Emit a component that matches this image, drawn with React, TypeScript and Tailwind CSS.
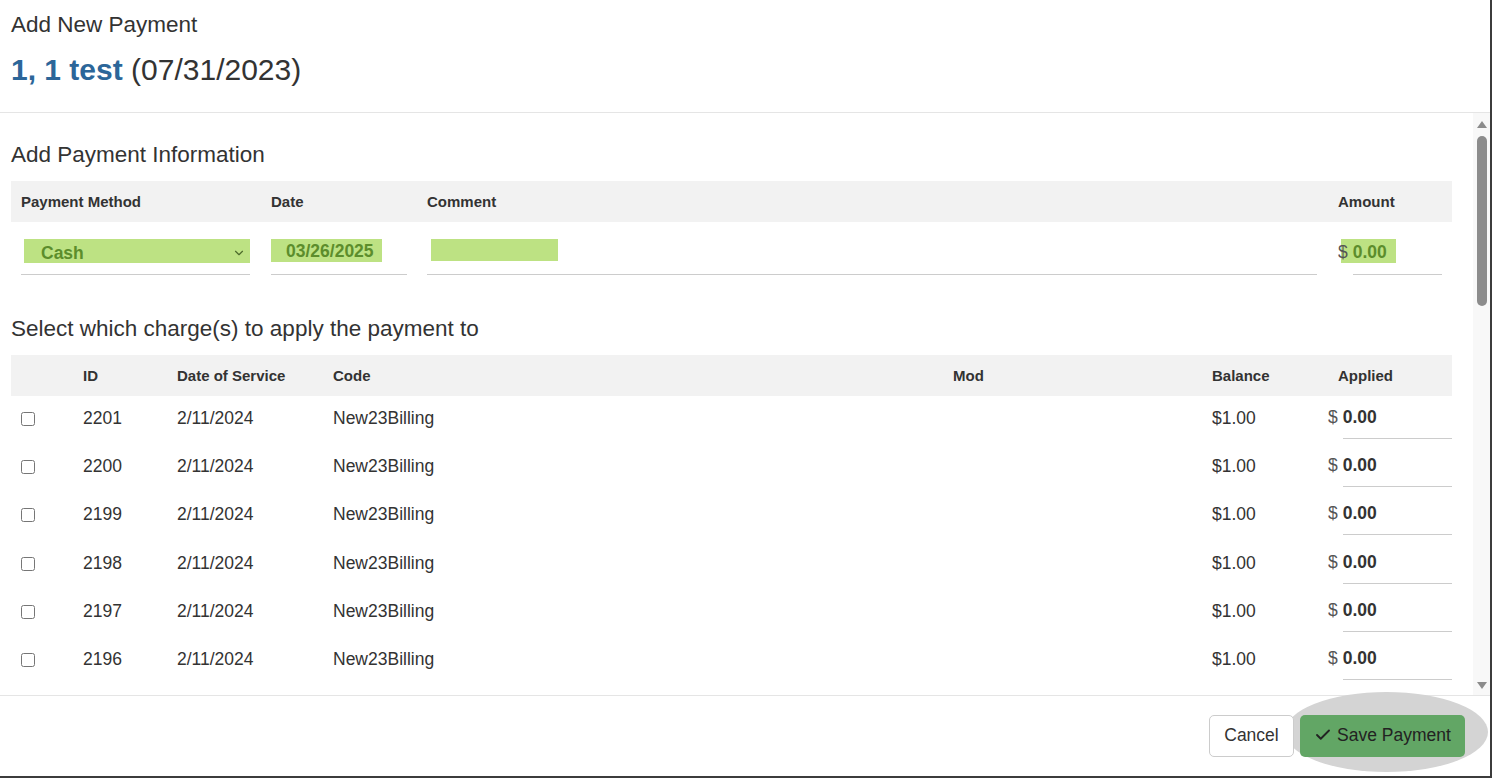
import { Check, ChevronDown } from 'lucide-react'

const charges = [
  { id: '2201', date: '2/11/2024', code: 'New23Billing', mod: '', balance: '$1.00', applied: '0.00' },
  { id: '2200', date: '2/11/2024', code: 'New23Billing', mod: '', balance: '$1.00', applied: '0.00' },
  { id: '2199', date: '2/11/2024', code: 'New23Billing', mod: '', balance: '$1.00', applied: '0.00' },
  { id: '2198', date: '2/11/2024', code: 'New23Billing', mod: '', balance: '$1.00', applied: '0.00' },
  { id: '2197', date: '2/11/2024', code: 'New23Billing', mod: '', balance: '$1.00', applied: '0.00' },
  { id: '2196', date: '2/11/2024', code: 'New23Billing', mod: '', balance: '$1.00', applied: '0.00' },
]

// highlighter marks that sit over the inputs in the screenshot
const mark = 'bg-[#bde283] text-[#5c8d2c] font-bold'

function PaymentInfo() {
  return (
    <div>
      {/* Header row */}
      <div className="flex h-[41px] items-center bg-[#f2f2f2] pt-[2px] text-[15px] font-bold">
        <div className="w-[250px] px-[10px]">Payment Method</div>
        <div className="w-[156px] px-[10px]">Date</div>
        <div className="w-[911px] px-[10px]">Comment</div>
        <div className="flex-1 px-[10px]">Amount</div>
      </div>

      {/* Inputs */}
      <div className="flex h-[53px] text-[17.5px]">
        <div className="w-[250px] pl-[10px] pr-[11px]">
          <div className="mt-[17px] h-[36px] border-b border-[#cccccc]">
            <div className={`ml-[3px] flex h-[24px] items-center justify-between pl-[17px] pr-[4px] ${mark}`}>
              <span className="pt-[4px] leading-[24px]">Cash</span>
              <ChevronDown size={14} strokeWidth={2} className="mt-[4px] text-[#4d6b2c]" />
            </div>
          </div>
        </div>
        <div className="w-[156px] px-[10px]">
          <div className="mt-[17px] h-[36px] border-b border-[#cccccc]">
            <div className={`flex h-[23px] w-[111px] items-center pl-[15px] ${mark}`}>
              <span className="pt-[2px] leading-[23px]">03/26/2025</span>
            </div>
          </div>
        </div>
        <div className="w-[911px] pl-[10px] pr-[11px]">
          <div className="mt-[17px] h-[36px] border-b border-[#cccccc]">
            <div className={`ml-[4px] mt-[1px] h-[22px] w-[127px] ${mark}`} />
          </div>
        </div>
        <div className="flex flex-1 pl-[10px] pr-[10px]">
          <div className="mt-[18px] flex h-[24px] items-center text-[#555555]">
            <span className="relative z-10 leading-[24px]">$</span>
          </div>
          <div className="relative mt-[17px] ml-[5px] h-[36px] flex-1 border-b border-[#cccccc]">
            <div className={`absolute left-[-12px] top-0 flex h-[24px] w-[55px] items-center pl-[12px] ${mark}`}>
              <span className="pt-[2px] leading-[24px]">0.00</span>
            </div>
          </div>
        </div>
      </div>
    </div>
  )
}

function ChargesTable() {
  return (
    <div>
      <div className="flex h-[41px] items-center bg-[#f2f2f2] pt-[2px] text-[15px] font-bold">
        <div className="w-[62px]" />
        <div className="w-[94px] px-[10px]">ID</div>
        <div className="w-[156px] px-[10px]">Date of Service</div>
        <div className="w-[620px] px-[10px]">Code</div>
        <div className="w-[259px] px-[10px]">Mod</div>
        <div className="w-[116px] px-[10px]">Balance</div>
        <div className="flex-1 pl-[20px]">Applied</div>
      </div>
      {charges.map((c) => (
        <div key={c.id} className="flex h-[48.4px] text-[17.5px] leading-[25px]">
          <div className="flex w-[62px] items-start pl-[10px] pt-[16px]">
            <input type="checkbox" className="m-0 h-[14px] w-[14px]" />
          </div>
          <div className="w-[94px] px-[10px] pt-[10px]">{c.id}</div>
          <div className="w-[156px] px-[10px] pt-[10px]">{c.date}</div>
          <div className="w-[620px] px-[10px] pt-[10px]">{c.code}</div>
          <div className="w-[259px] px-[10px] pt-[10px]">{c.mod}</div>
          <div className="w-[116px] px-[10px] pt-[10px]">{c.balance}</div>
          <div className="flex flex-1 items-start pl-[10px] pt-[9px]">
            <span className="text-[#555555]">$</span>
            <div className="ml-[5px] h-[34px] flex-1 border-b border-[#cccccc] font-bold">
              {c.applied}
            </div>
          </div>
        </div>
      ))}
    </div>
  )
}

function FakeScrollbar() {
  return (
    <div className="flex w-[17px] flex-col items-center bg-[#f8f8f8]">
      <svg width="10" height="7" viewBox="0 0 10 7" className="mt-[8px]">
        <path d="M5 0 L10 7 L0 7 Z" fill="#8c8c8c" />
      </svg>
      <div className="mt-[8px] h-[170px] w-[10px] rounded-full bg-[#8c8c8c]" />
      <div className="flex-1" />
      <svg width="10" height="7" viewBox="0 0 10 7" className="mb-[6px]">
        <path d="M0 0 L10 0 L5 7 Z" fill="#8c8c8c" />
      </svg>
    </div>
  )
}

export default function App() {
  return (
    <div className="h-[778px] w-[1492px] overflow-hidden bg-[#3c3c3c] font-['Liberation_Sans',Arial,sans-serif] text-[#333333]">
      <div className="relative flex h-[776px] w-[1490px] flex-col bg-white">
        {/* Modal header */}
        <div className="h-[113px] border-b border-[#e5e5e5] px-[11px] pt-[12px]">
          <h4 className="text-[22.5px] leading-[25px]">Add New Payment</h4>
          <div className="mt-[16px] text-[30px] leading-[33px]">
            <span className="font-bold text-[#2c6699]">1, 1 test</span> (07/31/2023)
          </div>
        </div>

        {/* Scrolling body */}
        <div className="flex h-[583px] border-b border-[#e5e5e5]">
          <div className="flex-1 overflow-hidden pl-[11px] pr-[21px] pt-[29px]">
            <h4 className="text-[22.5px] leading-[25px]">Add Payment Information</h4>
            <div className="mt-[13.5px]">
              <PaymentInfo />
            </div>
            <h4 className="mt-[41.5px] text-[22.5px] leading-[25px]">
              Select which charge(s) to apply the payment to
            </h4>
            <div className="mt-[13.5px]">
              <ChargesTable />
            </div>
          </div>
          <FakeScrollbar />
        </div>

        {/* Footer */}
        <div className="relative flex flex-1 items-center justify-end gap-[6px] pr-[25px]">
          <div className="absolute left-[1285px] top-[-4px] h-[80px] w-[203px] rounded-[50%] bg-[#d4d4d4]" />
          <button className="relative h-[42px] w-[85px] rounded-[5px] border border-[#cccccc] bg-white pb-[2px] text-[17.5px] text-[#333333]">
            Cancel
          </button>
          <button className="relative flex h-[42px] w-[165px] items-center justify-center gap-[5px] rounded-[5px] bg-[#62a665] pb-[2px] text-[17.5px] text-[#222222]">
            <Check size={18} strokeWidth={2.5} />
            Save Payment
          </button>
        </div>
      </div>
    </div>
  )
}
